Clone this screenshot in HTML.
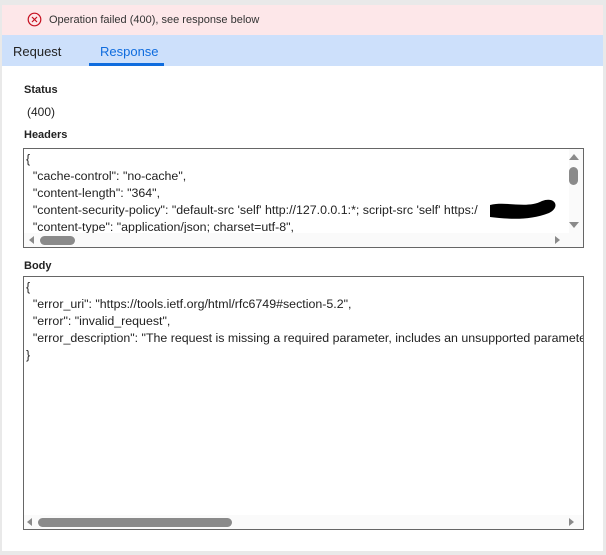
<!DOCTYPE html>
<html><head><style>
*{margin:0;padding:0;box-sizing:border-box}
body{width:606px;height:555px;background:#e9e9e9;font-family:"Liberation Sans",sans-serif;font-size:12px;color:#222;position:relative;overflow:hidden}
.main{position:absolute;left:2px;top:5px;width:601px;height:546px;background:#fff}
.banner{position:absolute;left:0;top:0;width:601px;height:30px;background:#fde7e9}
.banner span{position:absolute;left:47px;top:9px;font-size:11px;color:#333}
.tabs{position:absolute;left:0;top:30px;width:601px;height:31px;background:#cde0fb}
.tab{position:absolute;top:9px;font-size:13px}
.ul{position:absolute;left:87px;top:58px;width:75px;height:3px;background:#0f6cde}
.lbl{position:absolute;left:22px;font-weight:bold;font-size:11px}
.box{position:absolute;left:21px;width:561px;border:1px solid #666;background:#fff;overflow:hidden}
pre{font-family:"Liberation Sans",sans-serif;font-size:12.4px;line-height:17px;padding:2px 0 0 2px;white-space:pre;color:#222}
.hs{position:absolute;background:#fafafa}
.thumb{position:absolute;background:#8a8a8a;border-radius:5px}
.ar{position:absolute;width:0;height:0}
</style></head><body>
<div class="main">
<div class="banner">
<svg style="position:absolute;left:25px;top:7px" width="15" height="15" viewBox="0 0 15 15"><circle cx="7.5" cy="7.5" r="6.3" fill="none" stroke="#c50f1f" stroke-width="1.2"/><path d="M5 5L10 10M10 5L5 10" stroke="#c50f1f" stroke-width="1.2"/></svg>
<span>Operation failed (400), see response below</span></div>
<div class="tabs"><div class="tab" style="left:11px">Request</div><div class="tab" style="left:98px;color:#0f6cde">Response</div></div>
<div class="ul"></div>
<div class="lbl" style="top:79px">Status</div>
<div style="position:absolute;left:25px;top:100px;font-size:12px">(400)</div>
<div class="lbl" style="top:124px">Headers</div>
<div class="box" style="top:143px;height:100px">
<pre>{
  "cache-control": "no-cache",
  "content-length": "364",
  "content-security-policy": "default-src 'self' http://127.0.0.1:*; script-src 'self' https:/<span style="color:#fff">xxxxxxxxx</span>n
  "content-type": "application/json; charset=utf-8",</pre>
<svg style="position:absolute;left:463px;top:46px" width="75" height="30"><path d="M3 10 C20 6,40 14,55 6 C68 1,74 12,62 18 C42 26,20 24,3 22Z" fill="#000"/></svg>
<div class="hs" style="left:0;top:84px;width:545px;height:15px"></div>
<div class="hs" style="left:545px;top:0;width:15px;height:99px"></div>
<div class="thumb" style="left:16px;top:87px;width:35px;height:9px"></div>
<div class="thumb" style="left:545px;top:18px;width:9px;height:18px"></div>
<div class="ar" style="left:5px;top:87px;border-right:5px solid #8a8a8a;border-top:4px solid transparent;border-bottom:4px solid transparent"></div>
<div class="ar" style="left:531px;top:87px;border-left:5px solid #8a8a8a;border-top:4px solid transparent;border-bottom:4px solid transparent"></div>
<div class="ar" style="left:545px;top:5px;border-bottom:6px solid #8a8a8a;border-left:5px solid transparent;border-right:5px solid transparent"></div>
<div class="ar" style="left:545px;top:73px;border-top:6px solid #8a8a8a;border-left:5px solid transparent;border-right:5px solid transparent"></div>
</div>
<div class="lbl" style="top:255px">Body</div>
<div class="box" style="top:271px;height:254px">
<pre>{
  "error_uri": "https://tools.ietf.org/html/rfc6749#section-5.2",
  "error": "invalid_request",
  "error_description": "The request is missing a required parameter, includes an unsupported parameter value
}</pre>
<div class="hs" style="left:0;top:238px;width:560px;height:15px"></div>
<div class="thumb" style="left:14px;top:241px;width:194px;height:9px"></div>
<div class="ar" style="left:3px;top:241px;border-right:5px solid #8a8a8a;border-top:4px solid transparent;border-bottom:4px solid transparent"></div>
<div class="ar" style="left:545px;top:241px;border-left:5px solid #8a8a8a;border-top:4px solid transparent;border-bottom:4px solid transparent"></div>
</div>
</div>
</body></html>
